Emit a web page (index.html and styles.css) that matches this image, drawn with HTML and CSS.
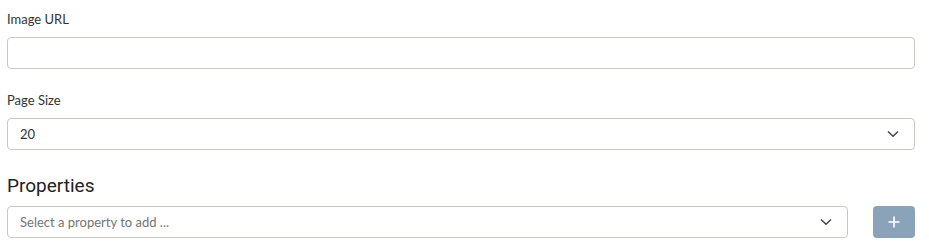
FILE: index.html
```html
<!DOCTYPE html>
<html>
<head>
<meta charset="utf-8">
<link rel="stylesheet" href="styles.css">
</head>
<body>
<div class="form">
  <div class="field">
    <label class="label">Image URL</label>
    <input class="control" type="text">
  </div>
  <div class="field">
    <label class="label">Page Size</label>
    <div class="control select">
      <span class="value">20</span>
      <svg class="chev" width="12" height="8" viewBox="0 0 12 8"><path d="M1 1.5 L6 6.2 L11 1.5" fill="none" stroke="#444" stroke-width="1.5"/></svg>
    </div>
  </div>
  <h2 class="heading">Properties</h2>
  <div class="row">
    <div class="control select grow">
      <span class="placeholder">Select a property to add ...</span>
      <svg class="chev" width="12" height="8" viewBox="0 0 12 8"><path d="M1 1.5 L6 6.2 L11 1.5" fill="none" stroke="#444" stroke-width="1.5"/></svg>
    </div>
    <button class="add" type="button">
      <svg width="12" height="12" viewBox="0 0 12 12"><path d="M6 0.5 V11.5 M0.5 6 H11.5" stroke="#fff" stroke-width="1.6"/></svg>
    </button>
  </div>
</div>
</body>
</html>
```
FILE: styles.css
```css
* { box-sizing: border-box; }
html, body { margin: 0; padding: 0; background: #fff; }
body {
  font-family: Lato, "Open Sans", sans-serif;
  color: #333;
  font-size: 13px;
}
.form {
  padding: 9px 14px 0 7px;
  display: flex;
  flex-direction: column;
}
.field {
  display: flex;
  flex-direction: column;
  gap: 8px;
  margin-bottom: 21px;
}
.field + .field { margin-bottom: 24px; }
.label {
  line-height: 20px;
  font-size: 13px;
  color: #333;
}
.control {
  height: 32px;
  border: 1px solid #c9c9c4;
  border-radius: 4px;
  background: #fff;
  font-family: inherit;
  font-size: 13px;
  color: #333;
  padding: 0 12px;
  width: 100%;
  margin: 0;
  outline: none;
}
.select {
  display: flex;
  align-items: center;
  justify-content: space-between;
  padding: 0 15px 0 12px;
}
.value { color: #333; }
.placeholder { color: #757575; }
.chev { display: block; }
.heading {
  margin: 0 0 8px;
  font-family: Roboto, "Noto Sans", sans-serif;
  font-size: 19px;
  line-height: 24px;
  font-weight: 400;
  color: #222;
}
.row {
  display: flex;
  align-items: center;
  gap: 25px;
}
.grow { flex: 1; width: auto; }
.add {
  width: 42px;
  height: 32px;
  border: none;
  border-radius: 4px;
  background: #8aa3b8;
  display: flex;
  align-items: center;
  justify-content: center;
  padding: 0;
}
```
